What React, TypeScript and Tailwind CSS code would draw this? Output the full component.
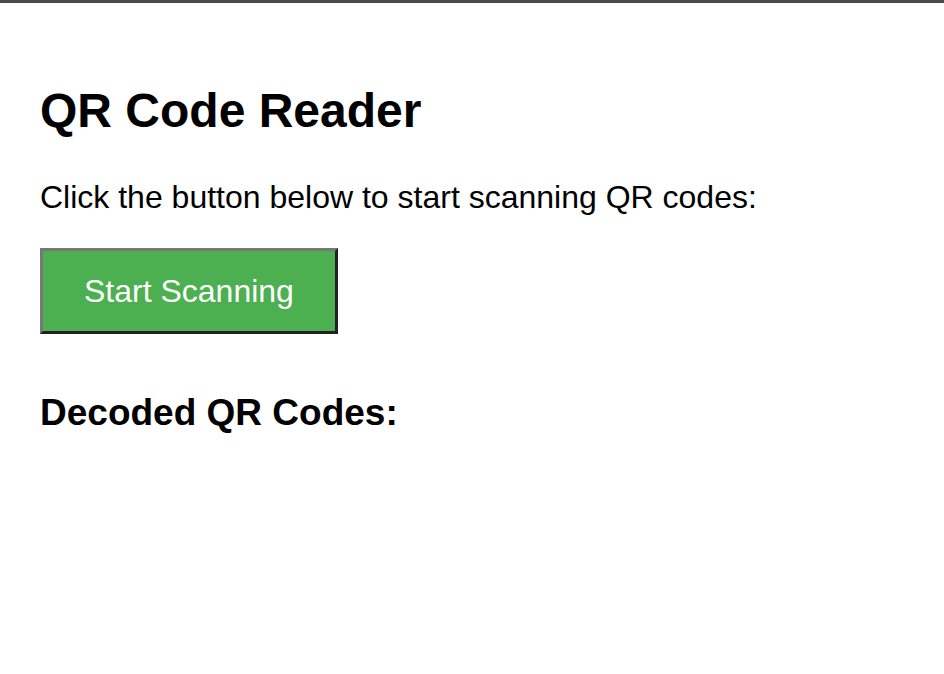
import React from "react";

export default function App() {
  return (
    <div
      className="min-h-[674px] bg-white text-black"
      style={{ fontFamily: '"Liberation Sans", Arial, Helvetica, sans-serif' }}
    >
      <div className="h-[3px] bg-[#4a4a4a]" />
      <div className="px-[40px] pt-[80px]">
        <h1 className="text-[48px] font-bold leading-[56px]">QR Code Reader</h1>
        <p className="mt-[40px] text-[32px] leading-[37px]">
          Click the button below to start scanning QR codes:
        </p>
        <button className="mt-[32px] border-[3px] border-t-[#777777] border-l-[#777777] border-b-[#222222] border-r-[#222222] bg-[#4caf50] px-[41px] py-[21px] text-[32px] leading-[38px] text-white">
          Start Scanning
        </button>
        <h2 className="mt-[57px] text-[37px] font-bold leading-[43px]">Decoded QR Codes:</h2>
      </div>
    </div>
  );
}
